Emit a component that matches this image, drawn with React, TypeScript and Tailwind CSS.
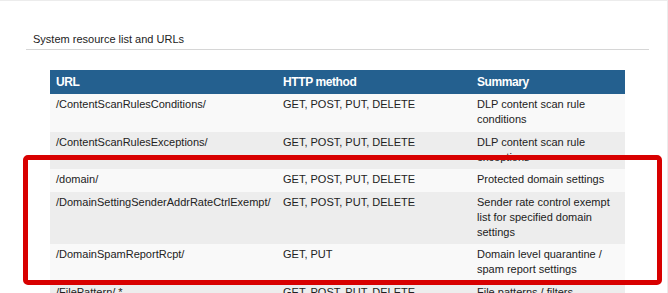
import React from "react";

type Row = { url: string; method: string; summary: string };

const rows: Row[] = [
  { url: "/ContentScanRulesConditions/", method: "GET, POST, PUT, DELETE", summary: "DLP content scan rule conditions" },
  { url: "/ContentScanRulesExceptions/", method: "GET, POST, PUT, DELETE", summary: "DLP content scan rule exceptions" },
  { url: "/domain/", method: "GET, POST, PUT, DELETE", summary: "Protected domain settings" },
  { url: "/DomainSettingSenderAddrRateCtrlExempt/", method: "GET, POST, PUT, DELETE", summary: "Sender rate control exempt list for specified domain settings" },
  { url: "/DomainSpamReportRcpt/", method: "GET, PUT", summary: "Domain level quarantine / spam report settings" },
  { url: "/FilePattern/ *", method: "GET, POST, PUT, DELETE", summary: "File patterns / filters" },
];

const App: React.FC = () => {
  return (
    <div
      className="relative w-[668px] h-[293px] overflow-hidden bg-white border-t border-r border-[#ececec]"
      style={{ fontFamily: '"Liberation Sans", Arial, sans-serif' }}
    >
      {/* Section title */}
      <div className="ml-[26px] w-[623px] pt-[31px] pb-[3px] pl-[7px] border-b border-[#d6d6d6] text-[11px] leading-[14px] text-[#222]">
        System resource list and URLs
      </div>

      {/* Table */}
      <div className="ml-[50px] mt-[20px] w-[575px] text-[11px] leading-[15px] text-[#222]">
        <div className="grid grid-cols-[227px_194px_154px] h-[24px] items-center bg-[#24608f] text-white font-bold text-[12px] tracking-[-0.4px]">
          <div className="px-[6px]">URL</div>
          <div className="px-[6px]">HTTP method</div>
          <div className="px-[6px]">Summary</div>
        </div>
        {rows.map((r, i) => (
          <div
            key={r.url}
            className={`grid grid-cols-[227px_194px_154px] pt-[3px] pb-[4.5px] ${i % 2 === 0 ? "bg-[#f9f9f9]" : "bg-[#ededed]"}`}
          >
            <div className="px-[6px]">{r.url}</div>
            <div className="px-[6px]">{r.method}</div>
            <div className="px-[6px]">{r.summary}</div>
          </div>
        ))}
      </div>

      {/* Highlight annotation */}
      <div className="absolute left-[23px] top-[154px] w-[639px] h-[130px] border-[5px] border-[#d80000] rounded-[5px]" />
    </div>
  );
};

export default App;
